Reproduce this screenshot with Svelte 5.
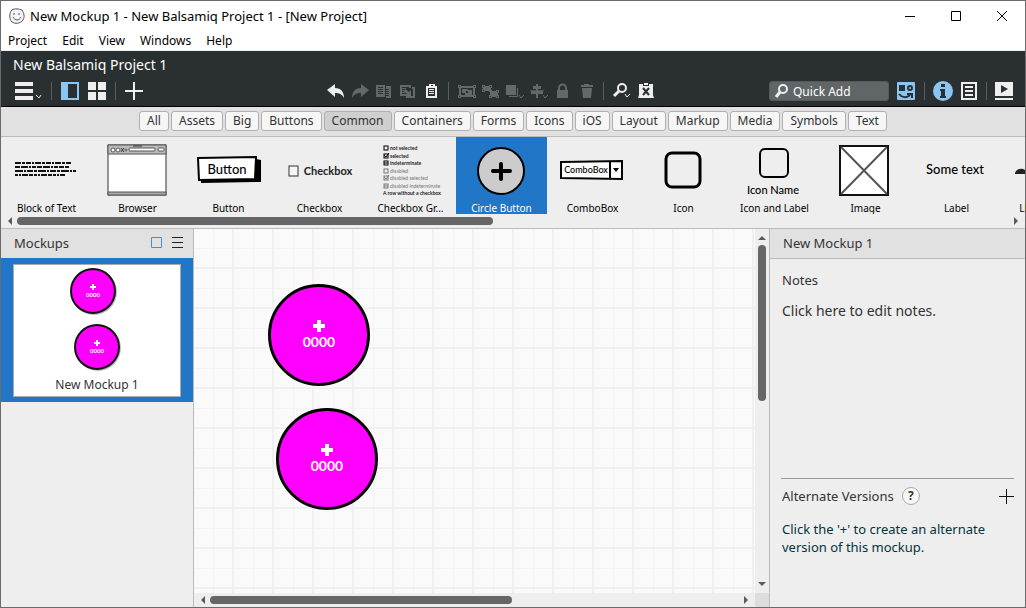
<script>
	const menus = ['Project', 'Edit', 'View', 'Windows', 'Help'];

	const categories = [
		'All',
		'Assets',
		'Big',
		'Buttons',
		'Common',
		'Containers',
		'Forms',
		'Icons',
		'iOS',
		'Layout',
		'Markup',
		'Media',
		'Symbols',
		'Text'
	];
	let category = $state('Common');

	const controls = [
		{ id: 'block', name: 'Block of Text' },
		{ id: 'browser', name: 'Browser' },
		{ id: 'button', name: 'Button' },
		{ id: 'checkbox', name: 'Checkbox' },
		{ id: 'group', name: 'Checkbox Gr...' },
		{ id: 'circle', name: 'Circle Button' },
		{ id: 'combo', name: 'ComboBox' },
		{ id: 'icon', name: 'Icon' },
		{ id: 'iconlabel', name: 'Icon and Label' },
		{ id: 'image', name: 'Image' },
		{ id: 'label', name: 'Label' },
		{ id: 'line', name: 'Line / Arrow' }
	];
	let selected = $state('circle');

	const checkRows = [
		{ text: 'not selected', mark: '' },
		{ text: 'selected', mark: 'check' },
		{ text: 'indeterminate', mark: 'dash' },
		{ text: 'disabled', mark: '', off: true },
		{ text: 'disabled selected', mark: 'check', off: true },
		{ text: 'disabled indeterminate', mark: 'dash', off: true }
	];

	// canvas position of every placed control
	const shapes = [
		{ x: 74, y: 55, label: '0000' },
		{ x: 82, y: 179, label: '0000' }
	];

	// same shapes in the navigator thumbnail
	const minis = [
		{ x: 79, y: 26 },
		{ x: 83, y: 82 }
	];

	const tools = [
		{ id: 'undo', name: 'Undo', on: true },
		{ id: 'redo', name: 'Redo' },
		{ id: 'copy', name: 'Copy' },
		{ id: 'duplicate', name: 'Duplicate' },
		{ id: 'paste', name: 'Paste', on: true },
		{ id: 'sep1' },
		{ id: 'group', name: 'Group' },
		{ id: 'ungroup', name: 'Ungroup' },
		{ id: 'layer', name: 'Layering' },
		{ id: 'align', name: 'Align' },
		{ id: 'lock', name: 'Lock' },
		{ id: 'trash', name: 'Delete' },
		{ id: 'sep2' },
		{ id: 'zoom', name: 'Zoom', on: true },
		{ id: 'markup', name: 'Hide markup', on: true }
	];
</script>

{#snippet toolIcon(id)}
	<svg width="20" height="20" viewBox="0 0 20 20" fill="currentColor" stroke="none">
		{#if id === 'undo'}
			<path d="M1 9 9 3v4c6 0 9 4 9 10-2-4-5-5-9-5v4z" />
		{:else if id === 'redo'}
			<path d="M19 9 11 3v4c-6 0-9 4-9 10 2-4 5-5 9-5v4z" />
		{:else if id === 'copy'}
			<path d="M2 4h9v12H2zM4 6v1h5V6zM4 8v1h5V8zM4 10v1h5v-1zM4 12v1h5v-1z" fill-rule="evenodd" />
			<path d="M12 5h5v12h-5v-2h3v-1h-3v-1h3v-1h-3v-1h3v-1h-3V9h3V8h-3z" />
		{:else if id === 'duplicate'}
			<path d="M2 4h11v3h-2V6H4v1h4v1H4v1h5v1H4v1h6v1H4v1h6v2H2z" />
			<path d="M14 6h3v11H8v-2h7V8h-1z" />
			<path d="m7 8 4 3 2-2v6H7l2-2-3-3z" />
		{:else if id === 'paste'}
			<path d="M7 3h6v2h2v12H4V5h3zM6 7v8h7V7zm1 1h5v1H7zm0 2h5v1H7zm0 2h5v1H7zM9 4v1h2V4z" fill-rule="evenodd" />
		{:else if id === 'group'}
			<path d="M1 4h3v1h12V4h3v3h-1v7h1v3h-3v-1H4v1H1v-3h1V7H1zM4 7v7h12V7z" fill-rule="evenodd" />
			<path d="M2 5h1v1H2zM17 5h1v1h-1zM2 15h1v1H2zM17 15h1v1h-1z" fill="#2a2f31" />
			<path d="M5 8h6v1h4v5H8v-2H5z" />
			<path d="M9 10h2v2H9z" fill="#2a2f31" />
		{:else if id === 'ungroup'}
			<path d="M1 4h3v1h4V4h3v3h-1v2h1v2H8v-1H4v1H1V8h1V7H1zM9 9h2v1h4V9h3v3h-1v2h1v3h-3v-1h-4v1H8v-3h1z" />
			<path d="M2 5h1v1H2zM9 5h1v1H9zM2 9h1v1H2zM16 10h1v1h-1zM9 15h1v1H9zM16 15h1v1h-1z" fill="#2a2f31" />
		{:else if id === 'layer'}
			<path d="M1 4h10v10H1zM12 7h1v9H4v-1h8z" />
			<path d="m14 14 2 3 3-3" fill="none" stroke="currentColor" />
		{:else if id === 'align'}
			<path d="M7 3h2v2h3v3H9v2h5v3H9v4H7v-4H2v-3h5V8H4V5h3z" />
			<path d="M1 9h14v1H1z" opacity="0.7" />
			<path d="m14 14 2 3 3-3" fill="none" stroke="currentColor" />
		{:else if id === 'lock'}
			<path d="M4 9h1V7a4 4 0 0 1 9 0v2h1v8H4zm3 0h5V7a2 2 0 0 0-5 0z" fill-rule="evenodd" />
		{:else if id === 'trash'}
			<path d="M7 3h5v1h4v2H4V4h3zM5 7h10l-1 10H6z" />
		{:else if id === 'zoom'}
			<circle cx="10" cy="7" r="4" fill="none" stroke="currentColor" stroke-width="2" />
			<path d="m7 10-5 5" stroke="currentColor" stroke-width="3" />
			<path d="m13 13 2 3 3-3" fill="none" stroke="currentColor" />
		{:else if id === 'markup'}
			<path d="M3 3h14v11l1 3H2l1-3z" />
			<path d="M7 3h6v2H7z" fill="#2a2f31" />
			<path d="M8 2h4v2H8z" />
			<path d="m7 7 6 7M13 7l-6 7" fill="none" stroke="#2a2f31" stroke-width="2" />
		{/if}
	</svg>
{/snippet}

{#snippet preview(id)}
	<svg width="90" height="59" viewBox="0 0 90 59" class="preview">
		{#if id === 'block'}
			<g stroke="#111" stroke-width="2" fill="none">
				<path d="M13 21h57" stroke-dasharray="6 1 3 1 5 1 2 1" />
				<path d="M13 25h54" stroke-dasharray="5 1 7 1 2 1 4 1" />
				<path d="M13 29h61" stroke-dasharray="8 1 2 1 6 1 3 1" />
				<path d="M13 33h50" stroke-dasharray="3 1 2 1 6 1 4 1" />
			</g>
		{:else if id === 'browser'}
			<rect x="15" y="3" width="58" height="50" fill="#fff" stroke="#333" />
			<path d="M15 3h58v9H15z" fill="#bbb" stroke="#555" />
			<path d="M15 50h58v3H15z" fill="#aaa" stroke="#555" />
			<g fill="#fff" stroke="#555">
				<circle cx="20" cy="8" r="2" />
				<circle cx="25" cy="8" r="2" />
				<circle cx="33" cy="8" r="1" />
				<rect x="36" y="6" width="26" height="3" rx="1" />
				<rect x="65" y="6" width="6" height="3" rx="1" />
			</g>
			<path d="m28 6 3 4m0-4-3 4M40 4h9" stroke="#333" />
		{:else if id === 'button'}
			<path d="m17 41 60-1V18l-5-1-55 20z" />
			<path d="m14 16 58-1-1 22-56 1z" fill="#fff" stroke="#000" stroke-width="2" />
			<text x="43" y="32" font-size="13">Button</text>
		{:else if id === 'checkbox'}
			<rect x="14" y="24" width="9" height="10" fill="#fff" fill-opacity="0.4" stroke="#333" />
			<text class="bold" x="53" y="33" font-size="11">Checkbox</text>
		{:else if id === 'group'}
			{#each checkRows as row, i}
				<g transform="translate(17 {3 + Math.round(i * 7.5)})" opacity={row.off ? 0.5 : 1}>
					<rect x="1" y="1" width="4" height="4" fill="none" stroke="#000" />
					{#if row.mark === 'check'}
						<path d="m1 2 2 2 3-4" fill="none" stroke="#000" />
					{:else if row.mark === 'dash'}
						<path d="M1 3h4" stroke="#000" />
					{/if}
					<text class="tiny" class:bold={!row.off} x="7" y="5">{row.text}</text>
				</g>
			{/each}
			<text class="tiny bold" x="17" y="53">A row without a checkbox</text>
		{:else if id === 'circle'}
			<circle cx="44" cy="29" r="23" fill="#ccc" stroke="#000" stroke-width="2" />
			<path d="M44 22v15M36 29h17" stroke="#000" stroke-width="4" stroke-linecap="round" />
		{:else if id === 'combo'}
			<path d="m13 20 61-1v18l-61-1z" fill="#fff" stroke="#000" stroke-width="2" />
			<path d="M62 19v18" stroke="#000" stroke-width="2" />
			<path d="M65 26h6l-3 4z" />
			<text x="38" y="31" font-size="9">ComboBox</text>
		{:else if id === 'icon'}
			<rect x="27" y="11" width="34" height="34" rx="6" fill="none" stroke="#000" stroke-width="3" />
		{:else if id === 'iconlabel'}
			<rect x="30" y="7" width="28" height="28" rx="5" fill="none" stroke="#000" stroke-width="2" />
			<text x="43" y="52" font-size="11" fill="#333">Icon Name</text>
		{:else if id === 'image'}
			<rect x="19" y="4" width="48" height="49" fill="#fff" stroke="#111" stroke-width="2" />
			<path d="m20 5 46 47M66 5 20 52" stroke="#555" stroke-width="2" />
		{:else if id === 'label'}
			<text x="43" y="32" font-size="13">Some text</text>
		{:else}
			<path d="M12 31c2-5 7-5 10-3v4H12z" fill="#222" />
		{/if}
	</svg>
{/snippet}

{#snippet arrow(dir)}
	<svg width="8" height="8" viewBox="0 0 8 8" fill="#5a5a5a">
		{#if dir === 'left'}
			<path d="M6 0v8L2 4z" />
		{:else if dir === 'right'}
			<path d="M2 0v8l4-4z" />
		{:else if dir === 'up'}
			<path d="M0 6h8L4 2z" />
		{:else}
			<path d="M0 2h8L4 6z" />
		{/if}
	</svg>
{/snippet}

<div class="window">
	<header class="titlebar">
		<svg width="16" height="16" viewBox="0 0 16 16" fill="none" stroke="#555">
			<path d="M3 2c3-2 7-1 10 0 2 3 3 7 1 10-3 4-8 4-11 2C0 11 0 5 3 2z" fill="#f4f4f4" />
			<path d="M4 9c2 4 6 4 8 0M5 5v2M10 5v2" />
		</svg>
		<h1>New Mockup 1 - New Balsamiq Project 1 - [New Project]</h1>
		<div class="window-buttons">
			<button aria-label="Minimize">
				<svg width="12" height="12"><path d="M1 6.500h10" stroke="#000" /></svg>
			</button>
			<button aria-label="Maximize">
				<svg width="12" height="12"><path d="M1.500 1.500h9v9h-9z" fill="none" stroke="#000" /></svg>
			</button>
			<button aria-label="Close">
				<svg width="12" height="12"><path d="m1 1 10 10M11 1 1 11" stroke="#000" /></svg>
			</button>
		</div>
	</header>

	<nav class="menubar">
		{#each menus as menu}
			<button>{menu}</button>
		{/each}
	</nav>

	<section class="toolbar">
		<h2>New Balsamiq Project 1</h2>
		<div class="tool-row">
			<div class="tools-left">
				<button class="main-menu" aria-label="Menu">
					<svg width="28" height="20" fill="#eee">
						<path d="M0 1h18v4H0zM0 8h18v4H0zM0 15h18v4H0z" />
						<path d="m21 14 3 3 2-3" fill="none" stroke="#eee" />
					</svg>
				</button>
				<i class="sep"></i>
				<button aria-label="Show navigator">
					<svg width="18" height="18"><path d="M0 0h18v18H0zM7 2v14h9V2z" fill="#8cc4f2" fill-rule="evenodd" /></svg>
				</button>
				<button aria-label="Show all mockups">
					<svg width="18" height="18"><path d="M0 0h8v8H0zM10 0h8v8h-8zM0 10h8v8H0zM10 10h8v8h-8z" fill="#eee" /></svg>
				</button>
				<i class="sep"></i>
				<button aria-label="New mockup">
					<svg width="18" height="18"><path d="M8 0h2v8h8v2h-8v8H8v-8H0V8h8z" fill="#eee" /></svg>
				</button>
			</div>

			<div class="tools-center">
				{#each tools as tool}
					{#if tool.name}
						<button class="tool" class:on={tool.on} aria-label={tool.name}>
							{@render toolIcon(tool.id)}
						</button>
					{:else}
						<i class="sep"></i>
					{/if}
				{/each}
			</div>

			<div class="tools-right">
				<label class="quick-add">
					<svg width="16" height="14" viewBox="0 0 16 14" fill="none" stroke="#eee">
						<circle cx="9" cy="5" r="4" stroke-width="2" />
						<path d="m6 8-4 5" stroke-width="3" />
					</svg>
					<input type="text" placeholder="Quick Add" aria-label="Quick Add" />
				</label>
				<button aria-label="Toggle UI library">
					<svg width="18" height="18" viewBox="0 0 18 18">
						<rect width="18" height="18" rx="1" fill="#8cc4f2" />
						<path d="M2 3h6v6H2z" fill="#2a2f31" />
						<circle cx="13" cy="6" r="2" fill="none" stroke="#2a2f31" stroke-width="2" />
						<path d="M2 12c3 4 8 4 11 1M10 12h5v4" fill="none" stroke="#2a2f31" stroke-width="2" />
					</svg>
				</button>
				<i class="sep"></i>
				<button aria-label="Project information">
					<svg width="20" height="20" viewBox="0 0 20 20">
						<circle cx="10" cy="10" r="10" fill="#8cc4f2" />
						<path d="M8 3h4v3H8zM7 8h5v7h1v2H7v-2h1v-5H7z" fill="#2a2f31" />
					</svg>
				</button>
				<button aria-label="Properties">
					<svg width="16" height="18"><path d="M0 0h16v18H0zM2 2v14h12V2zM4 4h8v2H4zM4 8h8v2H4zM4 12h8v2H4z" fill="#eee" fill-rule="evenodd" /></svg>
				</button>
				<i class="sep"></i>
				<button aria-label="Full screen presentation">
					<svg width="18" height="18"><path d="M0 0h18v14H0zM6 3v8l7-4zM0 16h18v2H0z" fill="#eee" fill-rule="evenodd" /></svg>
				</button>
			</div>
		</div>
	</section>

	<nav class="categories">
		{#each categories as name}
			<button class:active={name === category} onclick={() => (category = name)}>{name}</button>
		{/each}
	</nav>

	<section class="library">
		<div class="controls">
			{#each controls as control}
				<button
					class="control"
					class:selected={control.id === selected}
					onclick={() => (selected = control.id)}
				>
					{@render preview(control.id)}
					<span>{control.name}</span>
				</button>
			{/each}
		</div>
		<div class="scroll-x">
			{@render arrow('left')}
			<div class="track"><div class="thumb" style="width: 48%"></div></div>
			{@render arrow('right')}
		</div>
	</section>

	<main>
		<aside class="navigator">
			<header class="panel-header">
				<h2>Mockups</h2>
				<button aria-label="Thumbnail view">
					<svg width="11" height="11"><path d="M.5.5h10v10H.5z" fill="none" stroke="#3c93dd" /></svg>
				</button>
				<button aria-label="List view">
					<svg width="11" height="11"><path d="M0 .5h11M0 5.500h11M0 10.500h11" stroke="#222" /></svg>
				</button>
			</header>
			<div class="mockup">
				<button class="mockup-card">
					<svg width="166" height="108" viewBox="0 0 166 108">
						{#each minis as mini}
							<circle cx={mini.x + 1} cy={mini.y + 1} r="23" fill="#000" opacity="0.25" />
							<circle cx={mini.x} cy={mini.y} r="22" fill="#f0f" stroke="#111" stroke-width="2" />
							<path d="M{mini.x - 3} {mini.y - 4}h6m-3-3v6" stroke="#fff" stroke-width="2" />
							<text class="mini" x={mini.x} y={mini.y + 6}>0000</text>
						{/each}
					</svg>
					<span>New Mockup 1</span>
				</button>
			</div>
		</aside>

		<section class="editor">
			<div class="canvas">
				{#each shapes as shape}
					<button class="circle" style="left: {shape.x}px; top: {shape.y}px">
						<svg width="14" height="14"><path d="M7 1v12M1 7h12" stroke="#fff" stroke-width="4" /></svg>
						<span>{shape.label}</span>
					</button>
				{/each}
			</div>
			<div class="scroll-y">
				{@render arrow('up')}
				<div class="track"><div class="thumb" style="height: 47%"></div></div>
				{@render arrow('down')}
			</div>
			<div class="scroll-x">
				{@render arrow('left')}
				<div class="track"><div class="thumb" style="width: 57%"></div></div>
				{@render arrow('right')}
			</div>
			<div class="corner"></div>
		</section>

		<aside class="info">
			<header class="panel-header">
				<h2>New Mockup 1</h2>
			</header>
			<div class="notes">
				<h3>Notes</h3>
				<p>Click here to edit notes.</p>
			</div>
			<div class="versions">
				<header>
					<h3>Alternate Versions</h3>
					<button class="help" aria-label="Help">?</button>
					<button class="add" aria-label="Add version">
						<svg width="15" height="15"><path d="M7.500 0v15M0 7.500h15" stroke="#111" /></svg>
					</button>
				</header>
				<p>Click the '+' to create an alternate version of this mockup.</p>
			</div>
		</aside>
	</main>
</div>

<style>
	:global(body) {
		margin: 0;
	}

	.window {
		display: flex;
		flex-direction: column;
		box-sizing: border-box;
		min-height: 100vh;
		border: 1px solid #6b6b6b;
		background: #eee;
		color: #333;
		font-family: 'Noto Sans', sans-serif;
		font-size: 12px;
		overflow: hidden;
	}

	h1,
	h2,
	h3,
	p {
		margin: 0;
		font-size: 13px;
		font-weight: normal;
	}

	button {
		padding: 0;
		border: 0;
		background: none;
		color: inherit;
		font: inherit;
	}

	svg {
		display: block;
		flex: none;
	}

	.titlebar {
		display: flex;
		align-items: center;
		height: 29px;
		padding-left: 8px;
		background: #fff;
		color: #000;

		& h1 {
			margin-left: 5px;
		}
	}

	.window-buttons {
		display: flex;
		margin-left: auto;

		& button {
			display: grid;
			place-items: center;
			width: 46px;
			height: 29px;
		}
	}

	.menubar {
		display: flex;
		gap: 15px;
		height: 20px;
		padding: 0 7px;
		border-bottom: 1px solid #e8f0f0;
		background: #fff;
		color: #000;
	}

	.toolbar {
		padding: 4px 12px 2px;
		border-bottom: 1px solid #000;
		background: #2a2f31;
		color: #fff;

		& h2 {
			line-height: 20px;
			font-size: 14px;
		}
	}

	.tool-row {
		display: grid;
		grid-template-columns: 7fr auto 8fr;
		align-items: center;
		height: 26px;
		margin-top: 3px;
	}

	.tools-left,
	.tools-center,
	.tools-right {
		display: flex;
		align-items: center;
	}

	.sep {
		width: 1px;
		height: 18px;
		background: #5a5e60;
	}

	.tools-left {
		gap: 9px;
		padding-left: 2px;

		& .main-menu {
			margin-right: -1px;
		}
	}

	.tools-center .sep {
		margin: 0 6px 0 4px;
	}

	.tool {
		display: grid;
		place-items: center;
		width: 24px;
		height: 24px;
		color: #64686a;

		&.on {
			color: #eee;
		}
	}

	.tools-right {
		justify-content: flex-end;
		gap: 8px;

		& .sep {
			margin-left: 1px;
		}
	}

	.quick-add {
		display: flex;
		align-items: center;
		box-sizing: border-box;
		width: 120px;
		height: 20px;
		padding: 0 4px;
		border: 1px solid #55595c;
		border-radius: 3px;
		background: #606568;

		& input {
			width: 84px;
			margin-left: 3px;
			padding: 0;
			border: 0;
			outline: 0;
			background: none;
			color: #fff;
			font: inherit;
		}

		& input::placeholder {
			color: #fff;
			opacity: 1;
		}
	}

	.categories {
		display: flex;
		justify-content: center;
		gap: 2px;
		padding: 4px 0 5px;
		border-bottom: 1px solid #bbb;
		background: #e1e1e1;

		& button {
			box-sizing: border-box;
			height: 20px;
			padding: 0 7px;
			border: 1px solid #b0b0b0;
			border-radius: 3px;
			background: #f6f6f6;
			line-height: 18px;
		}

		& .active {
			background: #cfcfcf;
		}
	}

	.controls {
		display: flex;
		overflow: hidden;
	}

	.control {
		display: flex;
		flex: none;
		flex-direction: column;
		align-items: center;
		box-sizing: border-box;
		width: 91px;
		height: 77px;
		padding-top: 5px;
		color: #000;
		font-size: 10px;
		line-height: 14px;

		&.selected {
			background: #2176c7;
			color: #fff;
		}
	}

	.preview text {
		fill: #000;
		font-family: Lato, sans-serif;
		font-weight: 500;
		text-anchor: middle;
	}

	.preview .bold {
		fill: #222;
		font-weight: bold;
	}

	.preview .tiny {
		font-size: 5px;
		text-anchor: start;
	}

	.scroll-x,
	.scroll-y {
		display: flex;
		align-items: center;
		gap: 3px;
	}

	.scroll-x {
		height: 14px;
		padding: 0 5px;
	}

	.scroll-y {
		flex-direction: column;
		width: 14px;
		padding: 5px 0;
	}

	.track {
		flex: 1;
	}

	.thumb {
		border-radius: 4px;
		background: #666;
	}

	.scroll-x .thumb {
		height: 8px;
	}

	.scroll-y .thumb {
		width: 8px;
	}

	main {
		display: flex;
		flex: 1;
		border-top: 1px solid #bbb;
	}

	.navigator {
		width: 192px;
		border-right: 1px solid #bbb;
	}

	.panel-header {
		display: flex;
		align-items: center;
		gap: 10px;
		box-sizing: border-box;
		height: 29px;
		padding: 0 10px 2px 13px;
		background: #e1e1e1;

		& h2 {
			margin-right: auto;
		}
	}

	.mockup {
		padding: 6px 12px 5px;
		background: #2176c7;
	}

	.mockup-card {
		display: flex;
		flex-direction: column;
		align-items: center;
		box-sizing: border-box;
		width: 168px;
		height: 133px;
		border: 1px solid #aaa;
		background: #fff;
		line-height: 24px;
	}

	.mini {
		fill: #fff;
		font-family: Lato, sans-serif;
		font-size: 6px;
		font-weight: bold;
		text-anchor: middle;
	}

	.editor {
		display: grid;
		flex: 1;
		grid-template-columns: 1fr 14px;
		grid-template-rows: 1fr 14px;
	}

	.canvas {
		position: relative;
		background:
			linear-gradient(90deg, transparent 38px, #f0f0f0 38px) 0 0 / 40px 40px,
			linear-gradient(transparent 38px, #f0f0f0 38px) 0 0 / 40px 40px,
			linear-gradient(90deg, transparent 19px, #f4f4f4 19px 20px, transparent 20px) 0 0 / 40px 40px,
			linear-gradient(transparent 19px, #f4f4f4 19px 20px, transparent 20px) 0 0 / 40px 40px,
			#fafafa;
	}

	.circle {
		position: absolute;
		display: flex;
		flex-direction: column;
		align-items: center;
		justify-content: center;
		box-sizing: border-box;
		width: 102px;
		height: 102px;
		border: 3px solid #000;
		border-radius: 50%;
		background: #f0f;
		color: #fff;
		font-family: Lato, sans-serif;
		font-size: 14px;
		font-weight: bold;
		line-height: 18px;
	}

	.corner {
		background: #ddd;
	}

	.info {
		display: flex;
		flex-direction: column;
		width: 255px;
		border-left: 1px solid #bbb;

		& .panel-header {
			height: 30px;
			border-bottom: 1px solid #bbb;
		}
	}

	.notes {
		flex: 1;
		padding: 11px 12px;

		& h3 {
			line-height: 20px;
		}

		& p {
			margin-top: 11px;
			font-size: 14px;
			line-height: 20px;
		}
	}

	.versions {
		margin: 0 11px;
		padding: 8px 0 51px;
		border-top: 1px solid #999;

		& header {
			display: flex;
			align-items: center;
			height: 18px;
			padding-left: 1px;
		}

		& p {
			margin-top: 15px;
			padding-left: 1px;
			color: #033440;
			line-height: 18px;
		}
	}

	.help {
		width: 18px;
		height: 18px;
		margin-left: 8px;
		border: 1px solid #aaa;
		border-radius: 50%;
		background: #f8f8f8;
		font-weight: bold;
		line-height: 16px;
	}

	.add {
		margin-left: auto;
	}
</style>
